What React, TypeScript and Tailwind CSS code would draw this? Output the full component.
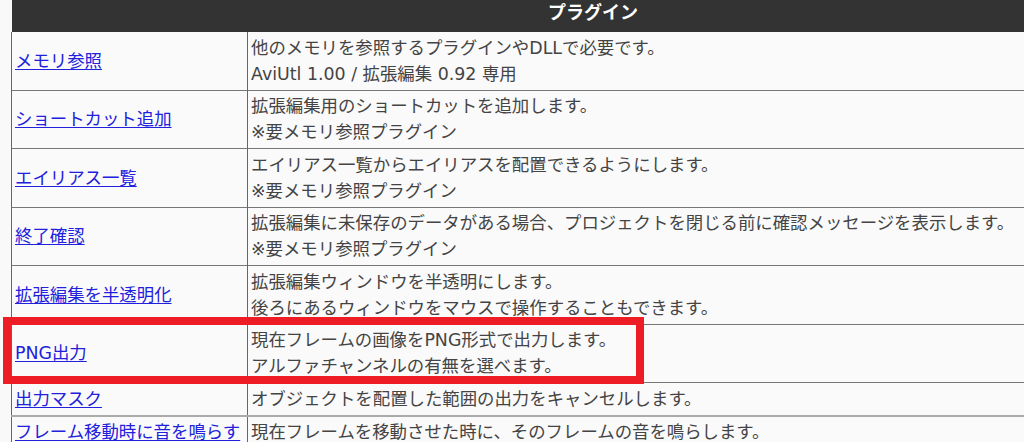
import React from "react";

const rows: { name: string; lines: string[] }[] = [
	{ name: "メモリ参照", lines: ["他のメモリを参照するプラグインやDLLで必要です。", "AviUtl 1.00 / 拡張編集 0.92 専用"] },
	{ name: "ショートカット追加", lines: ["拡張編集用のショートカットを追加します。", "※要メモリ参照プラグイン"] },
	{ name: "エイリアス一覧", lines: ["エイリアス一覧からエイリアスを配置できるようにします。", "※要メモリ参照プラグイン"] },
	{
		name: "終了確認",
		lines: ["拡張編集に未保存のデータがある場合、プロジェクトを閉じる前に確認メッセージを表示します。", "※要メモリ参照プラグイン"],
	},
	{ name: "拡張編集を半透明化", lines: ["拡張編集ウィンドウを半透明にします。", "後ろにあるウィンドウをマウスで操作することもできます。"] },
	{ name: "PNG出力", lines: ["現在フレームの画像をPNG形式で出力します。", "アルファチャンネルの有無を選べます。"] },
	{ name: "出力マスク", lines: ["オブジェクトを配置した範囲の出力をキャンセルします。"] },
	{ name: "フレーム移動時に音を鳴らす", lines: ["現在フレームを移動させた時に、そのフレームの音を鳴らします。"] },
];

export default function App() {
	return (
		<div
			className="relative h-[442px] w-[1024px] overflow-hidden bg-[#f9f9f9]"
			style={{ fontFamily: '"DejaVu Sans", "Noto Sans CJK JP", sans-serif' }}
		>
			<table className="ml-[11px] w-[1164px] border-collapse text-[17.4px] leading-[26px] text-[#444]">
				<thead>
					<tr>
						<th
							colSpan={2}
							className="h-[31px] bg-[#333] pb-[6px] text-center align-middle text-[18px] font-bold text-white"
						>
							プラグイン
						</th>
					</tr>
				</thead>
				<tbody>
					{rows.map((row, i) => (
						<tr
							key={row.name}
							className={
								i === 6
									? "border-b-2 border-b-[#aaa] bg-[#fafafa]"
									: "border-b border-b-[#777] bg-[#fafafa]"
							}
						>
							<td className="w-[236px] border-x border-x-[#666] pt-[2.5px] pb-[3px] pl-[3px] align-middle whitespace-nowrap">
								<a href="#" className="text-[#2020dd] underline underline-offset-2">
									{row.name}
								</a>
							</td>
							<td className="border-x border-x-[#666] pt-[2.5px] pb-[3px] pl-[3px] align-middle whitespace-nowrap">
								{row.lines.map((l) => (
									<div key={l}>{l}</div>
								))}
							</td>
						</tr>
					))}
				</tbody>
			</table>
			{/* annotation box */}
			<div className="absolute top-[317px] left-[3px] h-[67px] w-[641px] border-[8px] border-[#ee1c25]" />
		</div>
	);
}
